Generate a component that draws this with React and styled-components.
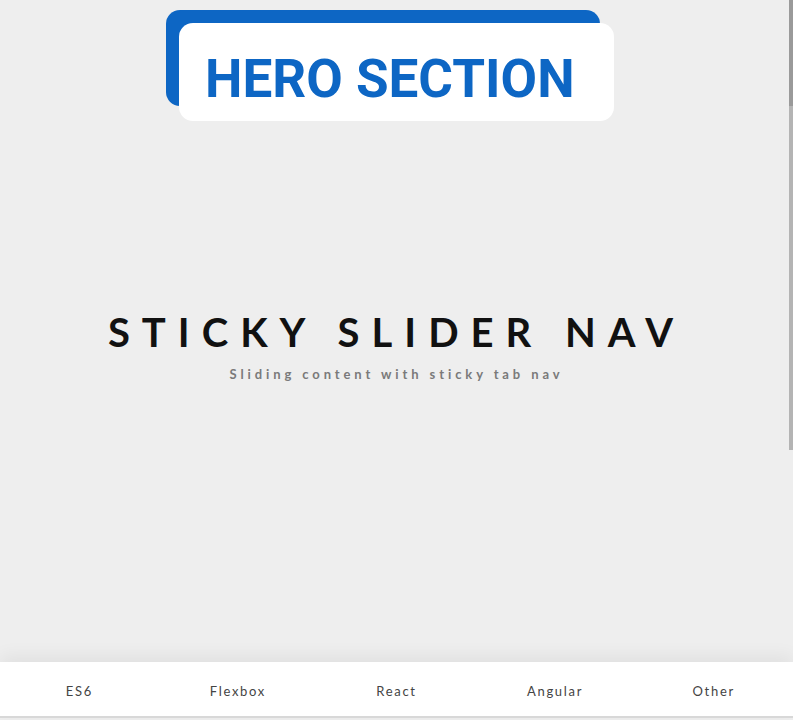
import React from "react";
import styled, { createGlobalStyle } from "styled-components";

const GlobalStyle = createGlobalStyle`
  html, body {
    margin: 0;
    padding: 0;
    background: #eeeeee;
    overflow: hidden;
  }
  * {
    box-sizing: border-box;
  }
`;

const Page = styled.div`
  position: relative;
  width: 793px;
  height: 720px;
  background: #eeeeee;
  font-family: Lato, "Open Sans", sans-serif;
`;

const Hero = styled.section`
  display: flex;
  flex-direction: column;
  align-items: center;
  justify-content: center;
  height: 662px;
  padding-top: 28px;
`;

const Title = styled.h1`
  margin: 0;
  font-family: Lato, sans-serif;
  font-size: 40px;
  font-weight: 700;
  letter-spacing: 0.3em;
  color: #111;
`;

const Subtitle = styled.p`
  margin: 10px 0 0;
  font-family: Lato, sans-serif;
  font-size: 13px;
  font-weight: 700;
  letter-spacing: 0.3em;
  color: #7a7a7a;
`;

const Badge = styled.div`
  position: absolute;
  top: 10px;
  left: 166px;
  width: 434px;
  height: 96px;
  border-radius: 14px;
  background: #0d66c4;
`;

const BadgeCard = styled.div`
  position: absolute;
  top: 13px;
  left: 13px;
  width: 435px;
  height: 98px;
  border-radius: 14px;
  background: #fff;
  display: flex;
  align-items: center;
  padding-left: 26px;
  padding-top: 13px;
  font-family: Roboto, "Liberation Sans", sans-serif;
  font-size: 53px;
  font-weight: 700;
  color: #0d66c4;
`;

const TabNav = styled.nav`
  display: grid;
  grid-template-columns: repeat(5, 1fr);
  height: 56px;
  background: #fff;
  box-shadow: 0 -6px 18px rgba(0, 0, 0, 0.06);
  border-bottom: 2px solid #d8d8d8;
`;

const Tab = styled.a`
  display: flex;
  align-items: center;
  justify-content: center;
  padding-top: 4px;
  font-family: Lato, sans-serif;
  font-size: 13px;
  font-weight: 400;
  letter-spacing: 0.13em;
  color: #444;
  text-decoration: none;
`;

const ScrollTrack = styled.div`
  position: absolute;
  top: 0;
  right: 0;
  width: 4px;
  height: 450px;
  background: #b4b4b4;
`;

const ScrollThumb = styled.div`
  width: 100%;
  height: 106px;
  background: #9a9a9a;
`;

const tabs = ["ES6", "Flexbox", "React", "Angular", "Other"];

export default function App() {
  return (
    <Page>
      <GlobalStyle />
      <Hero>
        <Title>STICKY SLIDER NAV</Title>
        <Subtitle>Sliding content with sticky tab nav</Subtitle>
      </Hero>
      <TabNav>
        {tabs.map((t) => (
          <Tab key={t} href={`#tab-${t.toLowerCase()}`}>
            {t}
          </Tab>
        ))}
      </TabNav>
      <Badge>
        <BadgeCard>HERO SECTION</BadgeCard>
      </Badge>
      <ScrollTrack>
        <ScrollThumb />
      </ScrollTrack>
    </Page>
  );
}
